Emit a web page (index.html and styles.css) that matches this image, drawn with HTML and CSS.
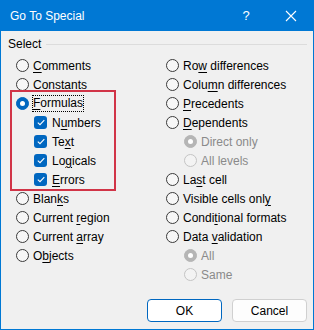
FILE: index.html
```html
<!DOCTYPE html>
<html>
<head>
<meta charset="utf-8">
<link rel="stylesheet" href="styles.css">
</head>
<body>
<div class="window">
  <div class="titlebar">
    <span class="title">Go To Special</span>
    <span class="tb-help">?</span>
    <span class="tb-close"><svg width="12" height="12" viewBox="0 0 12 12"><path d="M1 1L11 11M11 1L1 11" stroke="#fff" stroke-width="1.1" fill="none"/></svg></span>
  </div>
  <div class="content">
    <div class="group-head"><span>Select</span><div class="rule"></div></div>
    <div class="cols">
      <div class="col left">
        <div class="row"><span class="radio"></span><span><u>C</u>omments</span></div>
        <div class="row"><span class="radio"></span><span>Co<u>n</u>stants</span></div>
        <div class="row"><span class="radio on"></span><span class="focus"><u>F</u>ormulas</span></div>
        <div class="row sub"><span class="check"><svg width="8" height="7" viewBox="0 0 8 7"><path d="M0.8 3.6L3 5.7L7.3 1.2" stroke="#fff" stroke-width="1.1" fill="none"/></svg></span><span>N<u>u</u>mbers</span></div>
        <div class="row sub"><span class="check"><svg width="8" height="7" viewBox="0 0 8 7"><path d="M0.8 3.6L3 5.7L7.3 1.2" stroke="#fff" stroke-width="1.1" fill="none"/></svg></span><span>Te<u>x</u>t</span></div>
        <div class="row sub"><span class="check"><svg width="8" height="7" viewBox="0 0 8 7"><path d="M0.8 3.6L3 5.7L7.3 1.2" stroke="#fff" stroke-width="1.1" fill="none"/></svg></span><span>Lo<u>g</u>icals</span></div>
        <div class="row sub"><span class="check"><svg width="8" height="7" viewBox="0 0 8 7"><path d="M0.8 3.6L3 5.7L7.3 1.2" stroke="#fff" stroke-width="1.1" fill="none"/></svg></span><span><u>E</u>rrors</span></div>
        <div class="row"><span class="radio"></span><span>Blan<u>k</u>s</span></div>
        <div class="row"><span class="radio"></span><span>Current <u>r</u>egion</span></div>
        <div class="row"><span class="radio"></span><span>Current <u>a</u>rray</span></div>
        <div class="row"><span class="radio"></span><span>O<u>b</u>jects</span></div>
        <div class="highlight"></div>
      </div>
      <div class="col right">
        <div class="row"><span class="radio"></span><span>Ro<u>w</u> differences</span></div>
        <div class="row"><span class="radio"></span><span>Colu<u>m</u>n differences</span></div>
        <div class="row"><span class="radio"></span><span><u>P</u>recedents</span></div>
        <div class="row"><span class="radio"></span><span><u>D</u>ependents</span></div>
        <div class="row sub dis"><span class="radio on"></span><span>Direct only</span></div>
        <div class="row sub dis"><span class="radio"></span><span>All levels</span></div>
        <div class="row"><span class="radio"></span><span>La<u>s</u>t cell</span></div>
        <div class="row"><span class="radio"></span><span>Visible cells onl<u>y</u></span></div>
        <div class="row"><span class="radio"></span><span>Condi<u>t</u>ional formats</span></div>
        <div class="row"><span class="radio"></span><span>Data <u>v</u>alidation</span></div>
        <div class="row sub dis"><span class="radio on"></span><span>All</span></div>
        <div class="row sub dis"><span class="radio"></span><span>Same</span></div>
      </div>
    </div>
    <div class="buttons">
      <button class="btn default">OK</button>
      <button class="btn">Cancel</button>
    </div>
  </div>
</div>
</body>
</html>
```
FILE: styles.css
```css
html, body { margin: 0; padding: 0; }
body { background: #f0f0f0; font-family: "Liberation Sans", Arial, sans-serif; font-size: 12px; color: #000; }
.window {
  width: 314px; height: 330px; box-sizing: border-box;
  border: 1px solid #0078d4; border-top: none;
  background: #f0f0f0; display: flex; flex-direction: column;
}
.titlebar {
  height: 31px; background: #0078d4; color: #fff;
  display: flex; align-items: center; margin: 0 -1px;
  padding-left: 10px;
}
.title { font-size: 12px; flex: 1; }
.tb-help { width: 30px; text-align: center; font-size: 13px; margin-right: 15px; }
.tb-close { width: 30px; display: flex; justify-content: center; margin-right: 8px; }
.content { flex: 1; display: flex; flex-direction: column; padding: 5px 6px 0 7px; }
.group-head { display: flex; align-items: center; height: 16px; }
.group-head span { line-height: 16px; }
.rule { flex: 1; height: 1px; background: #dcdcdc; margin-left: 5px; margin-right: 0; }
.cols { display: flex; margin-top: 4px; }
.col { display: flex; flex-direction: column; position: relative; }
.col.left { width: 158px; box-sizing: border-box; padding-left: 8px; }
.col.right { padding-left: 0; }
.row { height: 19px; display: flex; align-items: center; gap: 4px; }
.row.sub { padding-left: 18px; }
.radio {
  width: 13px; height: 13px; box-sizing: border-box; border-radius: 50%;
  border: 1px solid #3a3a3a; background: #f7f7f7; flex: none;
}
.radio.on { background: #0067c0; border-color: #0067c0; position: relative; }
.radio.on::after {
  content: ""; position: absolute; left: 3px; top: 3px; width: 5px; height: 5px;
  border-radius: 50%; background: #fff;
}
.dis { color: #8a8a8a; }
.dis .radio { border-color: #c4c4c4; background: #f3f3f3; }
.dis .radio.on { background: #b5b5b5; border-color: #b5b5b5; }
.check {
  width: 13px; height: 13px; border-radius: 3px; background: #0067c0; flex: none;
  display: flex; align-items: center; justify-content: center; margin-right: 1px;
}
u { text-decoration-thickness: 1px; text-underline-offset: 2px; }
.focus { outline: 1px dotted #000; outline-offset: 0; line-height: 15px; }
.highlight {
  position: absolute; left: 2px; top: 34px; width: 102px; height: 97px;
  border: 2px solid #d13447; pointer-events: none;
}
.buttons { margin-top: auto; display: flex; justify-content: flex-end; gap: 10px; padding-bottom: 7px; }
.btn {
  width: 75px; height: 23px; box-sizing: border-box; border-radius: 4px;
  font-family: "Liberation Sans", Arial, sans-serif; font-size: 12px; color: #000; padding: 0;
  background: #fdfdfd; border: 1px solid #d0d0d0;
}
.btn.default { border-color: #0067c0; background: #fff; }
```
